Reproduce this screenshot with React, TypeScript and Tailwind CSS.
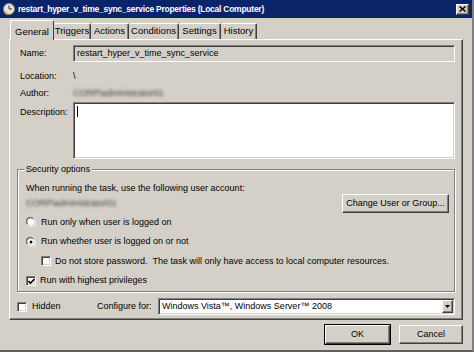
import React from "react";

const sunken =
  "border border-t-[#808080] border-l-[#808080] border-b-white border-r-white shadow-[inset_1px_1px_0_#404040,inset_-1px_-1px_0_#d4d0c8]";
const raised =
  "border border-t-white border-l-white border-b-[#404040] border-r-[#404040] shadow-[inset_-1px_-1px_0_#808080]";

function Radio({ checked }: { checked?: boolean }) {
  return (
    <svg width="10" height="10" viewBox="0 0 12 12" className="shrink-0">
      <path d="M1 8 A5 5 0 0 1 8 1" stroke="#808080" fill="none" />
      <path d="M2 8.5 A4 4 0 0 1 8.5 2" stroke="#404040" fill="none" />
      <circle cx="6" cy="6" r="4" fill="#fff" />
      <path d="M11 4 A5 5 0 0 1 4 11" stroke="#fff" fill="none" />
      {checked && <circle cx="6" cy="6" r="1.8" fill="#000" />}
    </svg>
  );
}

function Check({ checked }: { checked?: boolean }) {
  return (
    <div className={`w-[10px] h-[10px] bg-white shrink-0 flex items-center justify-center ${sunken}`}>
      {checked && (
        <svg width="7" height="7" viewBox="0 0 7 7">
          <path d="M0.5 3 L2.5 5 L6.5 1" stroke="#000" strokeWidth="1.6" fill="none" />
        </svg>
      )}
    </div>
  );
}

const tabs = [
  { label: "General", w: "w-[44px]" },
  { label: "Triggers", w: "w-[37px]" },
  { label: "Actions", w: "w-[38px]" },
  { label: "Conditions", w: "w-[50px]" },
  { label: "Settings", w: "w-[42px]" },
  { label: "History", w: "w-[36px]" },
];

export default function App() {
  return (
    <div className="w-[474px] h-[352px] bg-[#d4d0c8] flex flex-col font-['Liberation_Sans',Arial,sans-serif] text-[9px] text-black border-r-2 border-b-2 border-r-[#808080] border-b-[#606060] overflow-hidden">
      {/* title bar */}
      <div className="h-[18px] bg-[#0a246a] flex items-center pl-[3px] pr-[3px] shrink-0">
        <svg width="12" height="12" viewBox="0 0 12 12" className="shrink-0">
          <circle cx="6" cy="6" r="5.5" fill="#e8e4dc" stroke="#8a8a8a" />
          <path d="M6 2.5 V6 H9" stroke="#333" strokeWidth="1" fill="none" />
          <path d="M1 8 A5.5 5.5 0 0 0 5 11.5" stroke="#e0901c" strokeWidth="1.5" fill="none" />
        </svg>
        <span className="ml-[3px] text-white font-bold text-[8.5px] tracking-[-0.25px]">
          restart_hyper_v_time_sync_service Properties (Local Computer)
        </span>
        <div className="flex-1" />
        <div className={`w-[13px] h-[11px] bg-[#d4d0c8] flex items-center justify-center ${raised}`}>
          <svg width="7" height="6" viewBox="0 0 7 6">
            <path d="M0.5 0.5 L6.5 5.5 M6.5 0.5 L0.5 5.5" stroke="#000" strokeWidth="1.5" />
          </svg>
        </div>
      </div>

      <div className="px-[9px] pt-[2px] flex flex-col">
        {/* tabs */}
        <div className="h-[19px] flex items-end pl-[1px] relative z-10">
          {tabs.map((t, i) =>
            i === 0 ? (
              <div
                key={t.label}
                className={`${t.w} h-[20px] -mb-[1px] bg-[#d4d0c8] border-t border-l border-r border-t-white border-l-white border-r-[#404040] rounded-t-[2px] flex items-start justify-center pt-[4px] text-[9.5px]`}
              >
                {t.label}
              </div>
            ) : (
              <div
                key={t.label}
                className={`${t.w} h-[16px] border-t border-r border-t-white border-r-[#404040] shadow-[inset_-1px_0_0_#808080] rounded-t-[2px] flex items-center justify-center text-[9.5px]`}
              >
                {t.label}
              </div>
            )
          )}
        </div>

        {/* panel */}
        <div className={`h-[281px] flex flex-col px-[7px] pt-[5px] ${raised}`}>
          <div className="flex items-center h-[17px]">
            <span className="w-[56px] pl-[3px]">Name:</span>
            <div className={`flex-1 h-[17px] bg-[#d4d0c8] flex items-center pl-[3px] ${sunken}`}>
              restart_hyper_v_time_sync_service
            </div>
          </div>
          <div className="flex items-center h-[17px] mt-[6px]">
            <span className="w-[56px] pl-[3px]">Location:</span>
            <span>\</span>
          </div>
          <div className="flex items-center h-[17px]">
            <span className="w-[56px] pl-[3px]">Author:</span>
            <span className="blur-[1.4px] text-[#444]">CORP\administrator01</span>
          </div>
          <div className="flex h-[57px]">
            <span className="w-[56px] pl-[3px] pt-[4px]">Description:</span>
            <div className={`flex-1 bg-white pl-[3px] pt-[3px] ${sunken}`}>
              <div className="w-[1px] h-[11px] bg-black" />
            </div>
          </div>

          {/* security options group */}
          <div className="mt-[10px] h-[123px] border border-[#808080] shadow-[inset_1px_1px_0_#fff,1px_1px_0_#fff] relative flex flex-col px-[8px] pt-[12px]">
            <span className="absolute -top-[7px] left-[6px] bg-[#d4d0c8] px-[2px]">Security options</span>
            <div className="flex items-start">
              <div className="flex flex-col flex-1">
                <span className="h-[14px] flex items-center">When running the task, use the following user account:</span>
                <span className="h-[16px] flex items-center">
                  <span className="blur-[1.4px] text-[#444]">CORP\administrator01</span>
                </span>
              </div>
              <div
                className={`mt-[12px] w-[107px] h-[19px] bg-[#d4d0c8] flex items-center justify-center mr-[-3px] ${raised}`}
              >
                Change User or Group...
              </div>
            </div>
            <div className="flex items-center h-[19px] gap-[5px]">
              <Radio />
              <span>Run only when user is logged on</span>
            </div>
            <div className="flex items-center h-[20px] gap-[5px]">
              <Radio checked />
              <span>Run whether user is logged on or not</span>
            </div>
            <div className="flex items-center h-[20px] gap-[4px] pl-[15px]">
              <Check />
              <span>Do not store password.&nbsp; The task will only have access to local computer resources.</span>
            </div>
            <div className="flex items-center h-[20px] gap-[4px]">
              <Check checked />
              <span>Run with highest privileges</span>
            </div>
          </div>

          {/* hidden / configure */}
          <div className="flex items-center h-[17px] mt-[6px]">
            <Check />
            <span className="ml-[5px] w-[65px]">Hidden</span>
            <span className="w-[61px]">Configure for:</span>
            <div className={`flex-1 h-[17px] bg-white flex items-center pl-[3px] ${sunken}`}>
              <span className="flex-1">Windows Vista™, Windows Server™ 2008</span>
              <div className={`w-[11px] h-[13px] bg-[#d4d0c8] flex items-center justify-center mr-[1px] ${raised}`}>
                <svg width="5" height="3" viewBox="0 0 5 3">
                  <path d="M0 0 H5 L2.5 3 Z" fill="#000" />
                </svg>
              </div>
            </div>
          </div>
        </div>

        {/* buttons */}
        <div className="flex justify-end mt-[5px] gap-[9px]">
          <div className={`w-[65px] h-[19px] flex items-center justify-center outline outline-1 outline-black ${raised}`}>
            OK
          </div>
          <div className={`w-[64px] h-[19px] flex items-center justify-center ${raised}`}>Cancel</div>
        </div>
      </div>
    </div>
  );
}
